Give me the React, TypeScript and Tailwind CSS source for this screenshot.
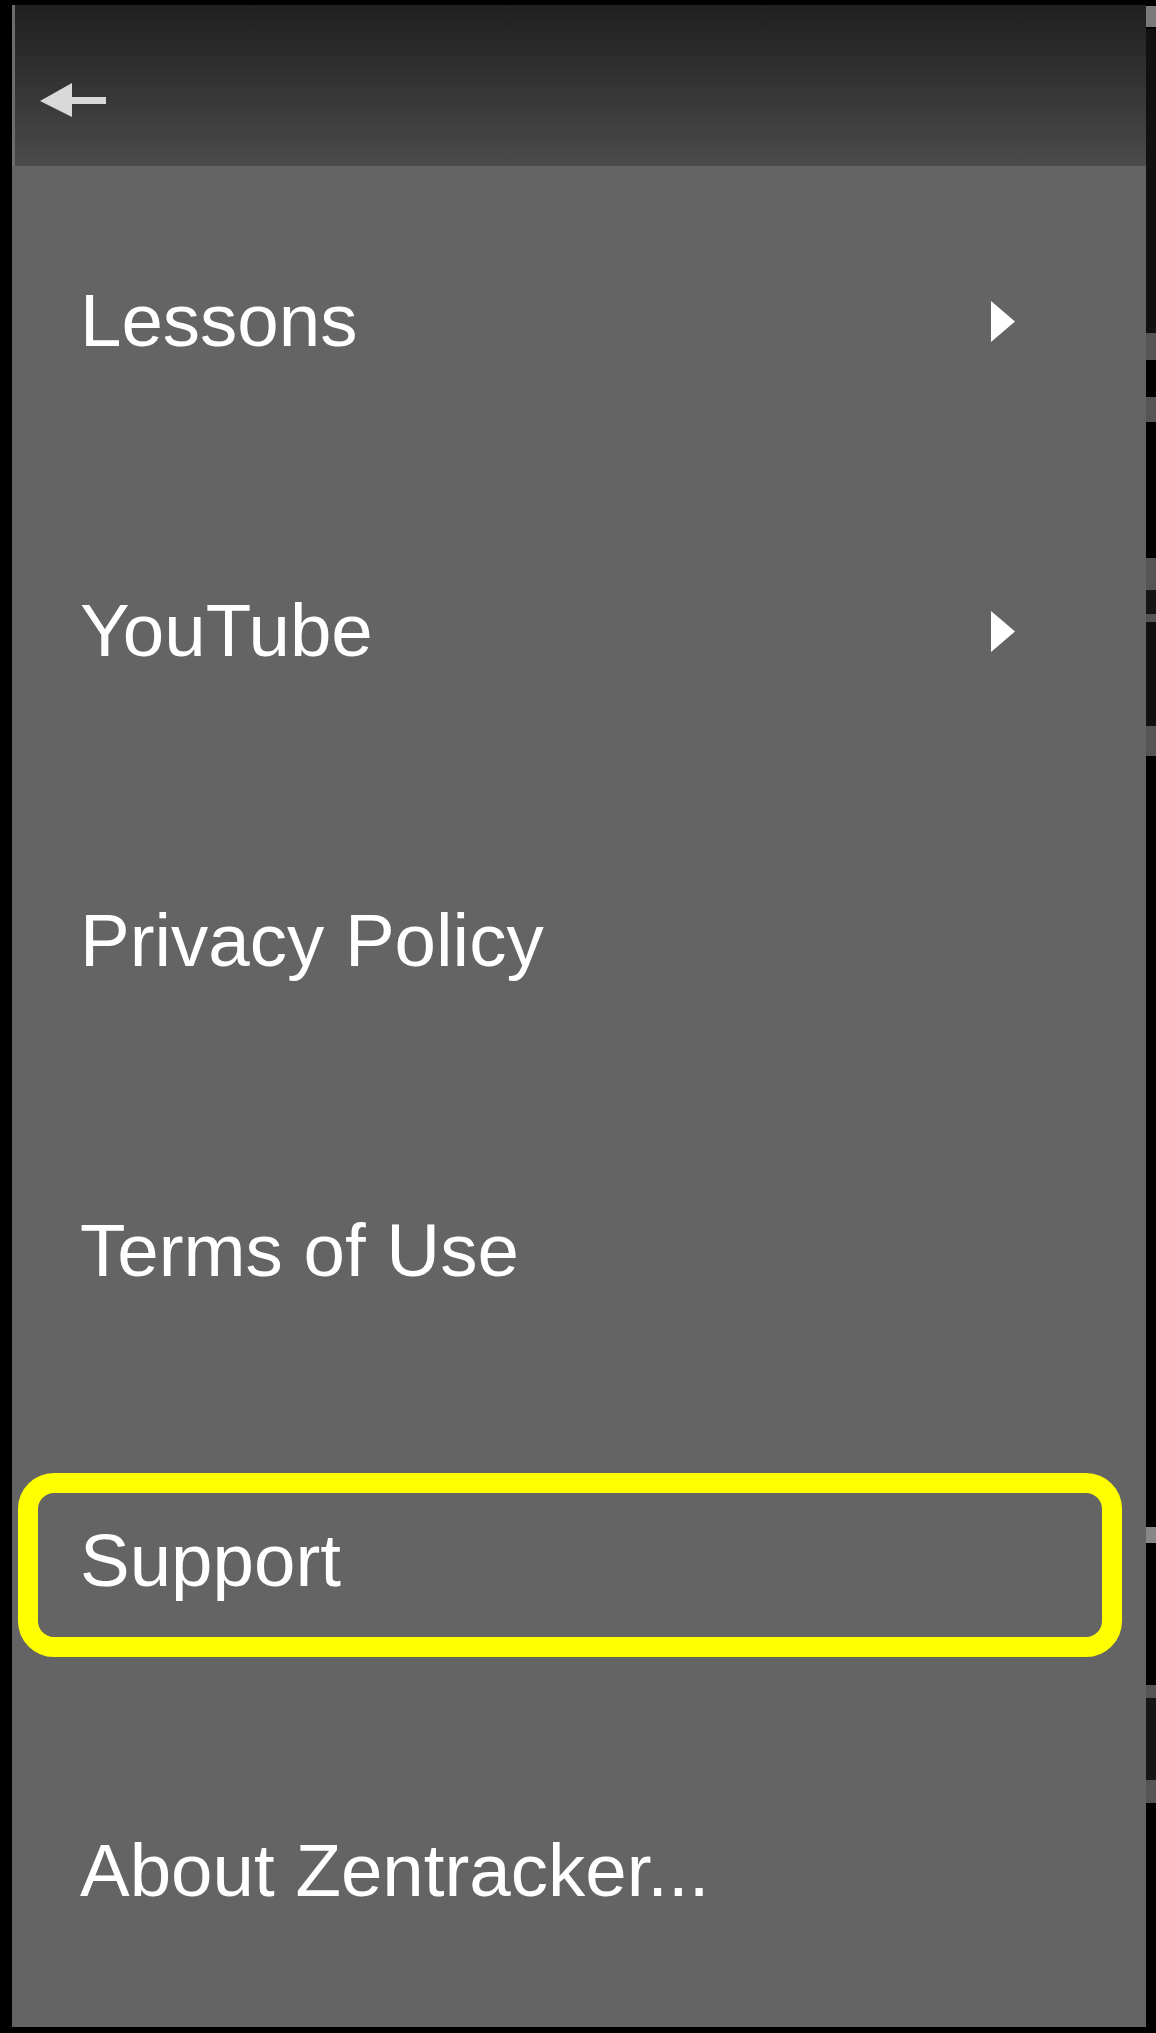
import React from 'react';

interface MenuItem {
  label: string;
  hasSubmenu?: boolean;
  highlighted?: boolean;
}

const items: MenuItem[] = [
  { label: 'Lessons', hasSubmenu: true },
  { label: 'YouTube', hasSubmenu: true },
  { label: 'Privacy Policy' },
  { label: 'Terms of Use' },
  { label: 'Support', highlighted: true },
  { label: 'About Zentracker...' },
];

// slivers of the app behind the drawer, showing along the right edge
const edgeBlocks: { h: number; c: string }[] = [
  { h: 6, c: 'bg-black' },
  { h: 21, c: 'bg-[#7a7a7a]' },
  { h: 2, c: 'bg-black' },
  { h: 304, c: 'bg-[#111111]' },
  { h: 27, c: 'bg-[#555555]' },
  { h: 37, c: 'bg-black' },
  { h: 25, c: 'bg-[#555555]' },
  { h: 136, c: 'bg-black' },
  { h: 32, c: 'bg-[#555555]' },
  { h: 24, c: 'bg-[#151515]' },
  { h: 8, c: 'bg-[#555555]' },
  { h: 104, c: 'bg-[#111111]' },
  { h: 30, c: 'bg-[#555555]' },
  { h: 771, c: 'bg-black' },
  { h: 16, c: 'bg-[#888888]' },
  { h: 142, c: 'bg-black' },
  { h: 13, c: 'bg-[#555555]' },
  { h: 82, c: 'bg-[#151515]' },
  { h: 23, c: 'bg-[#555555]' },
  { h: 240, c: 'bg-black' },
];

function BackArrow() {
  return (
    <svg width="66" height="34" viewBox="0 0 66 34" fill="#d9d9d9">
      <polygon points="0,18 32,0 32,34" />
      <rect x="31" y="14" width="35" height="7" />
    </svg>
  );
}

function SubmenuArrow() {
  return (
    <svg width="24" height="41" viewBox="0 0 24 41" fill="#ffffff">
      <polygon points="0,0 24,20.5 0,41" />
    </svg>
  );
}

export default function App() {
  return (
    <div className="w-[1156px] h-[2033px] bg-black flex overflow-hidden">
      <div className="w-[12px] shrink-0" />

      <div className="w-[1134px] shrink-0 flex flex-col pt-[5px]">
        {/* Header */}
        <div className="h-[161px] shrink-0 bg-gradient-to-b from-[#1f1f1f] to-[#4b4b4b] border-l-[3px] border-[#6c6c6c] pl-[25px] pt-[78px]">
          <BackArrow />
        </div>

        {/* Menu */}
        <div className="bg-[#646464] flex flex-col h-[1861px]">
          {items.map((item) => (
            <div
              key={item.label}
              className="relative h-[310px] shrink-0 flex items-center justify-between pl-[68px] pr-[131px]"
            >
              <span
                className="text-[74.5px] leading-none text-white"
                style={{ fontFamily: '"Liberation Sans", Arial, sans-serif' }}
              >
                {item.label}
              </span>
              {item.hasSubmenu && <SubmenuArrow />}
              {item.highlighted && (
                <div className="absolute left-[6px] right-[24px] top-[67px] h-[184px] border-[20px] border-[#ffff00] rounded-[36px]" />
              )}
            </div>
          ))}
        </div>
      </div>

      <div className="w-[10px] shrink-0 flex flex-col">
        {edgeBlocks.map((b, i) => (
          <div key={i} className={`${b.c} shrink-0`} style={{ height: b.h }} />
        ))}
      </div>
    </div>
  );
}
